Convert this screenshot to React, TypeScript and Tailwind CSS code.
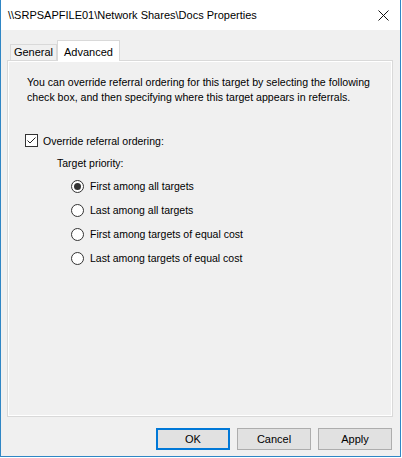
import React from "react";

const font = { fontFamily: '"Liberation Sans", Arial, sans-serif' };

function Radio({ checked, label }: { checked?: boolean; label: string }) {
  return (
    <div className="flex items-center h-[14px]">
      <div className="w-[13px] h-[13px] rounded-full border border-[#333] bg-white flex items-center justify-center">
        {checked && <div className="w-[7px] h-[7px] rounded-full bg-[#333]" />}
      </div>
      <span className="ml-[6px] text-[10.5px] text-black leading-[14px]">{label}</span>
    </div>
  );
}

function Button({ label, def }: { label: string; def?: boolean }) {
  return (
    <div
      className={
        "w-[74px] h-[22px] flex items-center justify-center bg-[#e1e1e1] text-[11px] text-black " +
        (def ? "border-2 border-[#0078d7]" : "border border-[#adadad]")
      }
    >
      {label}
    </div>
  );
}

export default function App() {
  return (
    <div className="w-[402px] h-[458px] bg-white" style={font}>
      <div className="w-[401px] h-[457px] flex flex-col border-x border-b border-[#2f86c5] bg-[#f0f0f0]">
        <div className="h-[30px] bg-white flex items-center justify-between pl-[7px] pr-[11px]">
          <span className="text-[11px] text-black">\\SRPSAPFILE01\Network Shares\Docs Properties</span>
          <svg width="11" height="11" viewBox="0 0 11 11">
            <path d="M0.5 0.5 L10.5 10.5 M10.5 0.5 L0.5 10.5" stroke="#111" strokeWidth="1" />
          </svg>
        </div>
        <div className="flex-1 flex flex-col pl-[6px] pr-[8px] pt-[10px]">
          <div className="flex items-end h-[20px] pl-[3px]">
            <div className="h-[16px] w-[47px] border-x border-t border-[#d9d9d9] bg-[#f0f0f0] text-[11px] flex items-center justify-center">
              General
            </div>
            <div className="h-[21px] w-[63px] -mb-[1px] relative z-10 border-x border-t border-[#d9d9d9] bg-white text-[11px] flex items-start justify-center pt-[3px]">
              Advanced
            </div>
          </div>
          <div className="h-[357px] w-[386px] border border-[#d9d9d9] shadow-[inset_1px_1px_0_#fff,inset_-1px_-1px_0_#fff] pl-[17px] flex flex-col">
            <div className="pt-[14px] ml-[2px] text-[10.6px] leading-[15px] text-black">
              <div>You can override referral ordering for this target by selecting the following</div>
              <div>check box, and then specifying where this target appears in referrals.</div>
            </div>
            <div className="mt-[29px] flex items-center h-[13px]">
              <div className="w-[13px] h-[13px] border border-[#333] bg-white flex items-center justify-center">
                <svg width="11" height="11" viewBox="0 0 11 11">
                  <path d="M1.5 5.5 L4 8 L9.5 2.5" stroke="#222" strokeWidth="1" fill="none" />
                </svg>
              </div>
              <span className="ml-[5px] text-[10.5px] leading-[14px]">Override referral ordering:</span>
            </div>
            <div className="mt-[9px] ml-[32px] h-[14px] text-[10.5px] leading-[14px]">Target priority:</div>
            <div className="mt-[9px] ml-[46px] flex flex-col gap-[10px]">
              <Radio checked label="First among all targets" />
              <Radio label="Last among all targets" />
              <Radio label="First among targets of equal cost" />
              <Radio label="Last among targets of equal cost" />
            </div>
          </div>
          <div className="flex justify-end gap-[7px] mt-[11px]">
            <Button label="OK" def />
            <Button label="Cancel" />
            <Button label="Apply" />
          </div>
        </div>
      </div>
    </div>
  );
}
